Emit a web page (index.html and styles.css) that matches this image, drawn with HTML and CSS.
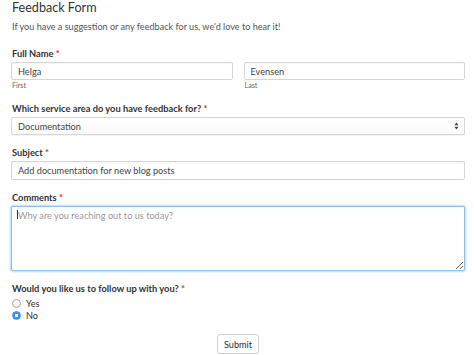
FILE: index.html
```html
<!DOCTYPE html>
<html lang="en">
<head>
<meta charset="utf-8">
<title>Feedback Form</title>
<link rel="stylesheet" href="styles.css">
</head>
<body>
<form class="page">
  <h1 class="title">Feedback Form</h1>
  <p class="intro">If you have a suggestion or any feedback for us, we'd love to hear it!</p>

  <div class="field">
    <div class="label">Full Name <span class="req">*</span></div>
    <div class="name-row">
      <div class="sub">
        <input class="input" type="text" value="Helga">
        <span class="hint">First</span>
      </div>
      <div class="sub">
        <input class="input" type="text" value="Evensen">
        <span class="hint">Last</span>
      </div>
    </div>
  </div>

  <div class="field">
    <div class="label">Which service area do you have feedback for? <span class="req">*</span></div>
    <div class="select">
      <span>Documentation</span>
      <svg class="arrows" width="5" height="8" viewBox="0 0 5 8"><path d="M2.5 0.5 L4.6 3.2 H0.4 Z M2.5 7.5 L4.6 4.8 H0.4 Z" fill="#444"/></svg>
    </div>
  </div>

  <div class="field">
    <div class="label">Subject <span class="req">*</span></div>
    <input class="input full" type="text" value="Add documentation for new blog posts">
  </div>

  <div class="field">
    <div class="label">Comments <span class="req">*</span></div>
    <div class="area-wrap">
      <textarea class="area" placeholder="Why are you reaching out to us today?"></textarea>
    </div>
  </div>

  <div class="field">
    <div class="label">Would you like us to follow up with you? <span class="req">*</span></div>
    <label class="radio"><span class="dot"></span>Yes</label>
    <label class="radio"><span class="dot on"></span>No</label>
  </div>

  <div class="actions">
    <button type="button" class="btn">Submit</button>
  </div>
</form>
</body>
</html>
```

FILE: styles.css
```css
* { box-sizing: border-box; }
html, body { margin: 0; padding: 0; background: #fff; }
body {
  font-family: Lato, "Open Sans", "Liberation Sans", sans-serif;
  color: #333;
}
.page {
  padding: 0 9px 0 11px;
  margin: 0;
}
.title {
  margin: 0 0 0 1px;
  font-size: 12.6px;
  line-height: 16px;
  font-weight: 400;
  color: #333;
}
.intro {
  margin: 5px 0 15px 1px;
  font-size: 9.1px;
  line-height: 12px;
  color: #555;
}
.field {
  margin-bottom: 12px;
}
.label {
  font-size: 9.3px;
  line-height: 12px;
  font-weight: 700;
  color: #333;
  margin: 0 0 2px 1px;
}
.req {
  color: #c9302c;
  font-weight: 700;
}
.name-row {
  display: grid;
  grid-template-columns: 1fr 1fr;
  column-gap: 11px;
}
.sub {
  display: flex;
  flex-direction: column;
}
.input {
  display: block;
  width: 100%;
  height: 18px;
  margin: 0;
  padding: 0 6px;
  border: 1px solid #d6d6d6;
  border-radius: 2px;
  font-family: inherit;
  font-size: 9.2px;
  color: #444;
  background: #fff;
  box-shadow: inset 0 1px 1px rgba(0,0,0,.04);
  outline: none;
}
.input.full { height: 19px; }
.hint {
  margin-top: 1px;
  font-size: 7.2px;
  line-height: 10px;
  color: #666;
  padding-left: 1px;
}
.select {
  display: flex;
  align-items: center;
  justify-content: space-between;
  height: 18px;
  padding: 0 5px 0 6px;
  border: 1px solid #d6d6d6;
  border-radius: 2px;
  font-size: 9.2px;
  color: #444;
  background: linear-gradient(#fff, #fafafa);
  box-shadow: 0 1px 1px rgba(0,0,0,.05);
}
.arrows { display: block; }
.area-wrap { position: relative; }
.area {
  display: block;
  width: 100%;
  height: 65px;
  margin: 0;
  padding: 3px 6px;
  border: 1px solid #8fc0e8;
  border-radius: 2px;
  font-family: inherit;
  font-size: 9.2px;
  line-height: 11px;
  color: #444;
  box-shadow: 0 0 2px 1px rgba(102,175,233,.45);
  outline: none;
  resize: vertical;
}
.area::placeholder { color: #9a9a9a; }
.area-wrap::before {
  content: "";
  position: absolute;
  left: 6px;
  top: 4px;
  width: 1px;
  height: 9px;
  background: #333;
}
.radio {
  display: flex;
  align-items: center;
  gap: 5px;
  height: 12px;
  font-size: 9.2px;
  color: #333;
  padding-left: 1px;
}
.dot {
  width: 9px;
  height: 9px;
  border-radius: 50%;
  border: 1px solid #a9a9a9;
  background: linear-gradient(#fff, #f0f0f0);
  flex: none;
}
.dot.on {
  border-color: #3a8ef5;
  background: radial-gradient(circle, #fff 0 1.6px, #3b93f7 2px);
}
.actions {
  display: flex;
  justify-content: center;
  margin-top: 13px;
}
.btn {
  height: 20px;
  padding: 0 6px;
  border: 1px solid #d0d0d0;
  border-radius: 3px;
  background: #fff;
  font-family: inherit;
  font-size: 9.2px;
  color: #333;
  box-shadow: 0 1px 1px rgba(0,0,0,.06);
}
```
